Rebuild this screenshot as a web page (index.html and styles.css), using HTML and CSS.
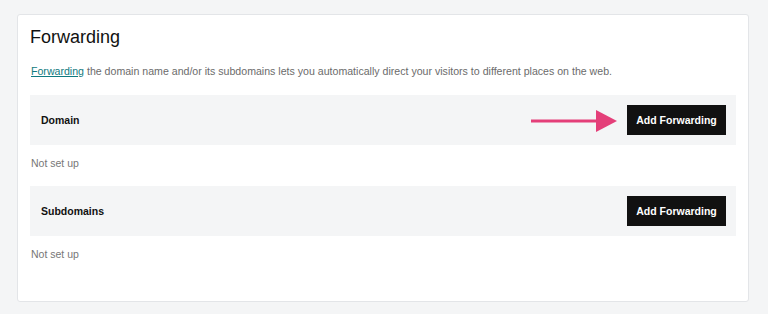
FILE: index.html
```html
<!DOCTYPE html>
<html>
<head>
<meta charset="utf-8">
<link rel="stylesheet" href="styles.css">
</head>
<body>
<div class="page">
  <div class="card">
    <h1 class="title">Forwarding</h1>
    <p class="desc"><a class="link" href="#">Forwarding</a> the domain name and/or its subdomains lets you automatically direct your visitors to different places on the web.</p>
    <div class="band">
      <span class="label">Domain</span>
      <div class="actions">
        <svg class="arrow" width="86" height="22" viewBox="0 0 86 22">
          <rect x="0" y="9.5" width="68" height="3" fill="#e43f79"/>
          <polygon points="65,0 86,11 65,22" fill="#e43f79"/>
        </svg>
        <button class="btn">Add Forwarding</button>
      </div>
    </div>
    <p class="status">Not set up</p>
    <div class="band band-2">
      <span class="label">Subdomains</span>
      <div class="actions">
        <button class="btn">Add Forwarding</button>
      </div>
    </div>
    <p class="status">Not set up</p>
  </div>
</div>
</body>
</html>
```
FILE: styles.css
```css
html, body {
  margin: 0;
  padding: 0;
  background: #f4f5f6;
  font-family: "Liberation Sans", Arial, sans-serif;
}
.page {
  padding: 14px 19px 12px 17px;
}
.card {
  background: #ffffff;
  border: 1px solid #e3e5e8;
  border-radius: 3px;
  padding: 11px 12px 38px 12px;
  height: 288px;
  box-sizing: border-box;
}
.title {
  margin: 0;
  font-size: 18px;
  line-height: 22px;
  font-weight: 400;
  color: #111111;
}
.desc {
  margin: 15px 0 0 1px;
  font-size: 10.6px;
  line-height: 16px;
  color: #6b6b6b;
}
.link {
  color: #0f7a80;
  text-decoration: underline;
}
.band {
  margin-top: 16px;
  height: 50px;
  background: #f4f5f6;
  display: flex;
  align-items: center;
  justify-content: space-between;
  padding: 0 10px 0 11px;
}
.band-2 {
  margin-top: 15px;
}
.label {
  font-size: 10.5px;
  font-weight: 700;
  color: #111111;
}
.actions {
  display: flex;
  align-items: center;
  gap: 10px;
}
.arrow {
  display: block;
  margin-top: 2px;
}
.btn {
  width: 99px;
  height: 30px;
  background: #111111;
  color: #ffffff;
  border: none;
  border-radius: 0;
  font-family: "Liberation Sans", Arial, sans-serif;
  font-size: 10.5px;
  font-weight: 700;
  padding: 0;
}
.status {
  margin: 10px 0 0 1px;
  font-size: 10.5px;
  line-height: 16px;
  color: #777777;
}
```
